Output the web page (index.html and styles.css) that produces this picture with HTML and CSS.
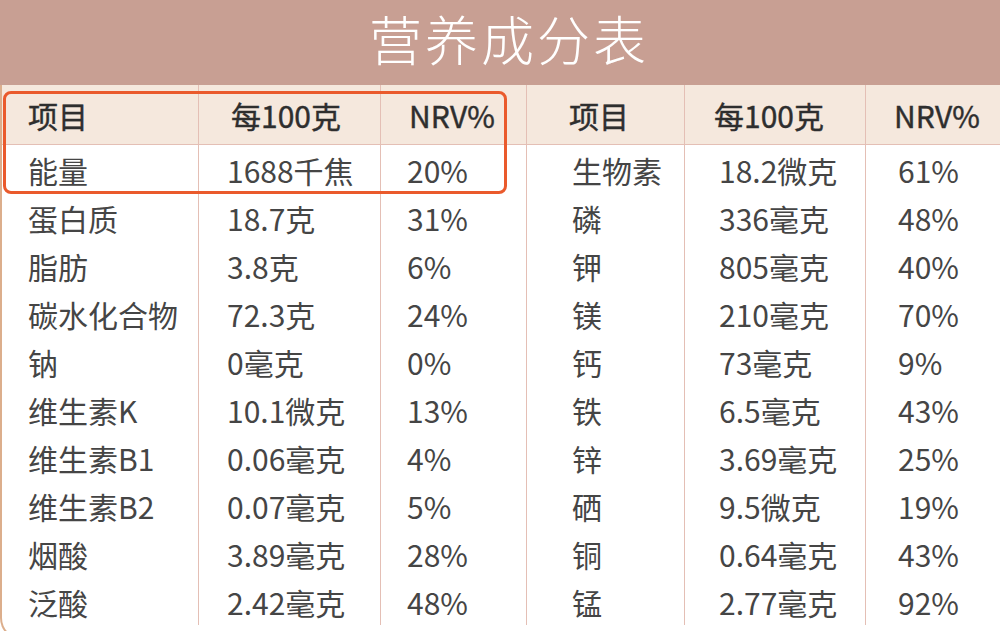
FILE: index.html
```html
<!DOCTYPE html>
<html lang="zh">
<head>
<meta charset="utf-8">
<title>营养成分表</title>
<link rel="stylesheet" href="styles.css">
</head>
<body>
<div class="frame">
  <div class="title"><span class="title-text">营养成分表</span></div>
  <div class="grid">
    <div class="cell head c1">项目</div>
    <div class="cell head c2">每100克</div>
    <div class="cell head c3">NRV%</div>
    <div class="cell head c4">项目</div>
    <div class="cell head c5">每100克</div>
    <div class="cell head c6">NRV%</div>

    <div class="cell c1">能量</div><div class="cell c2">1688千焦</div><div class="cell c3">20%</div>
    <div class="cell c4">生物素</div><div class="cell c5">18.2微克</div><div class="cell c6">61%</div>

    <div class="cell c1">蛋白质</div><div class="cell c2">18.7克</div><div class="cell c3">31%</div>
    <div class="cell c4">磷</div><div class="cell c5">336毫克</div><div class="cell c6">48%</div>

    <div class="cell c1">脂肪</div><div class="cell c2">3.8克</div><div class="cell c3">6%</div>
    <div class="cell c4">钾</div><div class="cell c5">805毫克</div><div class="cell c6">40%</div>

    <div class="cell c1">碳水化合物</div><div class="cell c2">72.3克</div><div class="cell c3">24%</div>
    <div class="cell c4">镁</div><div class="cell c5">210毫克</div><div class="cell c6">70%</div>

    <div class="cell c1">钠</div><div class="cell c2">0毫克</div><div class="cell c3">0%</div>
    <div class="cell c4">钙</div><div class="cell c5">73毫克</div><div class="cell c6">9%</div>

    <div class="cell c1">维生素K</div><div class="cell c2">10.1微克</div><div class="cell c3">13%</div>
    <div class="cell c4">铁</div><div class="cell c5">6.5毫克</div><div class="cell c6">43%</div>

    <div class="cell c1">维生素B1</div><div class="cell c2">0.06毫克</div><div class="cell c3">4%</div>
    <div class="cell c4">锌</div><div class="cell c5">3.69毫克</div><div class="cell c6">25%</div>

    <div class="cell c1">维生素B2</div><div class="cell c2">0.07毫克</div><div class="cell c3">5%</div>
    <div class="cell c4">硒</div><div class="cell c5">9.5微克</div><div class="cell c6">19%</div>

    <div class="cell c1">烟酸</div><div class="cell c2">3.89毫克</div><div class="cell c3">28%</div>
    <div class="cell c4">铜</div><div class="cell c5">0.64毫克</div><div class="cell c6">43%</div>

    <div class="cell c1">泛酸</div><div class="cell c2">2.42毫克</div><div class="cell c3">48%</div>
    <div class="cell c4">锰</div><div class="cell c5">2.77毫克</div><div class="cell c6">92%</div>
  </div>
  <div class="highlight"></div>
</div>
</body>
</html>
```

FILE: styles.css
```css
* { box-sizing: border-box; }
html, body { margin: 0; padding: 0; }
body {
  width: 1000px;
  height: 631px;
  overflow: hidden;
  background: #ffffff;
  font-family: "Noto Sans CJK SC", "Noto Sans", sans-serif;
  color: #454545;
}
.frame {
  position: relative;
  width: 1000px;
  height: 640px;
  border-left: 2px solid #dcae8c;
  border-bottom: 2px solid #dcae8c;
  border-bottom-left-radius: 22px;
}
.title {
  display: flex;
  justify-content: center;
  align-items: flex-start;
  height: 85px;
  margin-left: -2px;
  padding-left: 18px;
  background: #c89f93;
  color: #fff;
}
.title-text {
  font-size: 53px;
  font-weight: 300;
  line-height: normal;
  letter-spacing: 3px;
}
.grid {
  display: grid;
  grid-template-columns: 197px 182px 146px 158px 181px 134px;
  grid-template-rows: 60px repeat(10, 48px);
  margin-left: -2px;
  padding-left: 2px;
}
.cell {
  font-size: 30px;
  line-height: 48px;
  padding-top: 1px;
  white-space: nowrap;
  border-right: 1.5px solid #e4bfb5;
}
.c6 { border-right: none; }
.head {
  background: #f5e8dd;
  color: #2e2e2e;
  font-weight: 400;
  -webkit-text-stroke: 0.4px #2e2e2e;
  line-height: 60px;
  padding-top: 0;
  border-bottom: 1px solid #e4bfb5;
}
.c1 { padding-left: 26px; }
.c2 { padding-left: 28px; }
.c3 { padding-left: 26px; }
.c4 { padding-left: 45px; }
.c5 { padding-left: 34px; }
.c6 { padding-left: 32px; }
.head.c2 { padding-left: 32px; }
.head.c3 { padding-left: 28px; }
.head.c4 { padding-left: 42px; }
.head.c5 { padding-left: 29px; }
.head.c6 { padding-left: 28px; }
.highlight {
  position: absolute;
  left: 1px;
  top: 91px;
  width: 504px;
  height: 103px;
  border: 3px solid #ea5a2c;
  border-radius: 8px;
  pointer-events: none;
}
```
